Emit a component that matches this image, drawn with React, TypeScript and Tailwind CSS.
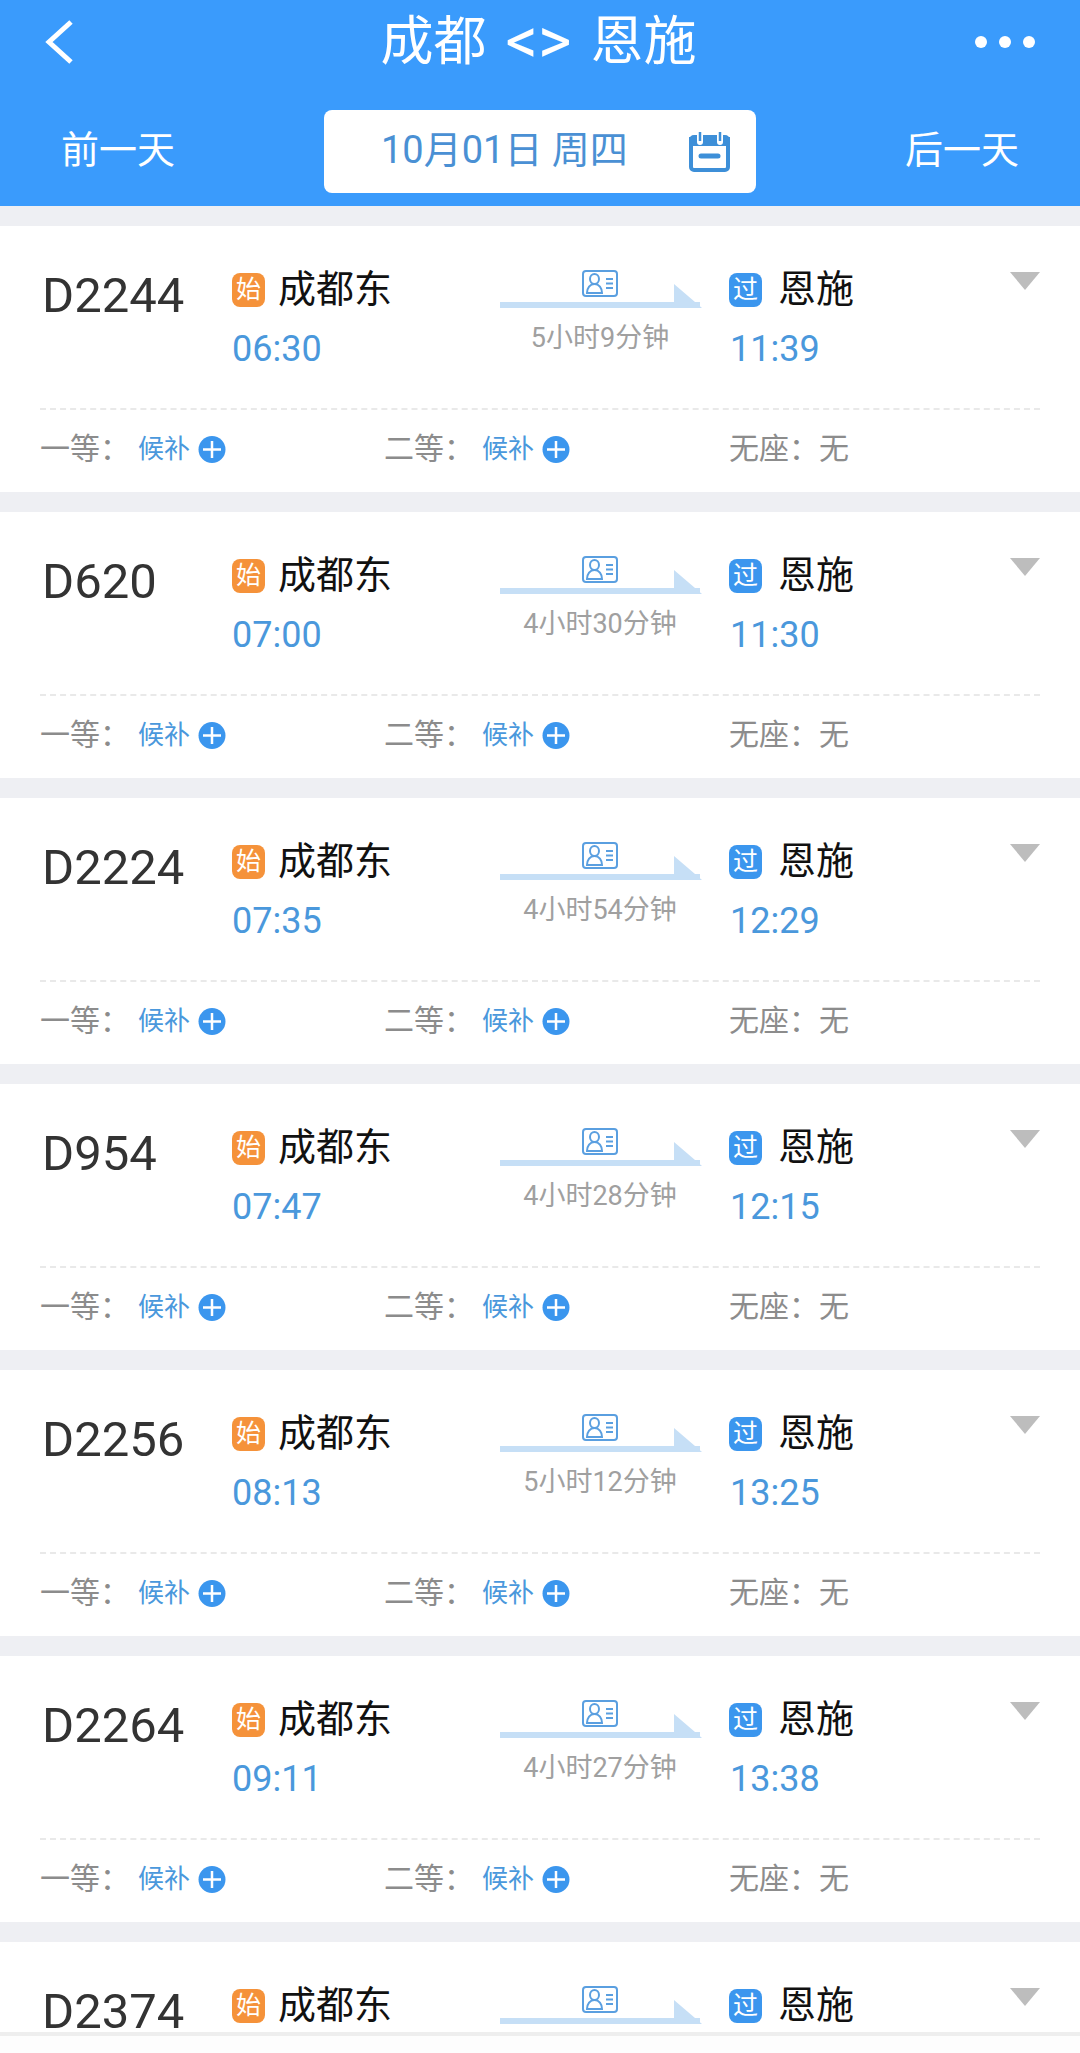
const trains = [
  { no: 'D2244', dep: '06:30', dur: '5小时9分钟', arr: '11:39' },
  { no: 'D620', dep: '07:00', dur: '4小时30分钟', arr: '11:30' },
  { no: 'D2224', dep: '07:35', dur: '4小时54分钟', arr: '12:29' },
  { no: 'D954', dep: '07:47', dur: '4小时28分钟', arr: '12:15' },
  { no: 'D2256', dep: '08:13', dur: '5小时12分钟', arr: '13:25' },
  { no: 'D2264', dep: '09:11', dur: '4小时27分钟', arr: '13:38' },
  { no: 'D2374', dep: '', dur: '', arr: '' },
]

function IdIcon() {
  return (
    <svg width="36" height="27" viewBox="0 0 36 27" fill="none" stroke="#5a9fe0" strokeWidth="2">
      <rect x="1" y="1" width="34" height="25" rx="3" />
      <ellipse cx="12.500" cy="9" rx="4.500" ry="5" />
      <path d="M5 23c0-5 3-9 7.500-9s7.500 4 7.500 9z" />
      <path d="M24 9h7M24 13.500h7M24 18h7" />
    </svg>
  )
}

function PlusDot() {
  return (
    <svg width="28" height="27" viewBox="0 0 28 27">
      <circle cx="14" cy="13.500" r="13.500" fill="#3b96ee" />
      <path d="M14 5v17M5 13.500h18" stroke="#fff" strokeWidth="2.500" />
    </svg>
  )
}

function CalendarIcon() {
  return (
    <svg width="43" height="41" viewBox="0 0 43 41" fill="none">
      <rect x="3" y="6" width="37" height="33" rx="3" stroke="#3d8fd8" strokeWidth="4" />
      <path d="M1 6h41v9H1z" fill="#3d8fd8" />
      <path d="M12 1v10M32 1v10" stroke="#fff" strokeWidth="6" strokeLinecap="round" />
      <path d="M12 1v9M32 1v9" stroke="#3d8fd8" strokeWidth="2.500" />
      <path d="M13 25h17" stroke="#3d8fd8" strokeWidth="5" strokeLinecap="round" />
    </svg>
  )
}

function Badge({ text, color }: { text: string; color: string }) {
  return (
    <span
      className={`flex h-[34px] w-[33px] shrink-0 items-center justify-center rounded-[8px] text-[25px] leading-none text-white ${color}`}
    >
      {text}
    </span>
  )
}

function Seat({ label, width }: { label: string; width: string }) {
  return (
    <div className={`flex items-center ${width}`}>
      <span className="w-[98px] text-[30px] leading-none text-[#8c8c8c]">{label}：</span>
      <span className="text-[26px] leading-none text-[#4a98dc]">候补</span>
      <span className="ml-[8px] flex">
        <PlusDot />
      </span>
    </div>
  )
}

function TrainCard({ no, dep, dur, arr }: (typeof trains)[number]) {
  return (
    <div className="h-[266px] shrink-0 bg-white">
      <div className="relative flex h-[182px] items-start pl-[42px]">
        <div className="mt-[43px] w-[190px] shrink-0 font-['Roboto'] text-[49px] leading-[54px] text-[#333]">{no}</div>
        <div className="w-[268px] shrink-0 pt-[45px]">
          <div className="flex h-[37px] items-center">
            <Badge text="始" color="bg-[#f5923a]" />
            <span className="ml-[13px] pb-[2px] text-[38px] leading-none text-[#111]">成都东</span>
          </div>
          <div className="mt-[21px] text-[36px] leading-[40px] text-[#4a98dc]">{dep}</div>
        </div>
        <div className="flex w-[200px] shrink-0 flex-col items-center pt-[44px]">
          <IdIcon />
          <div className="relative mt-[5px] h-[6px] w-full bg-[#c6dff6]">
            <span className="absolute right-[-2px] bottom-0 h-[24px] w-[28px] bg-[#c6dff6] [clip-path:polygon(0_0,100%_100%,0_100%)]" />
          </div>
          <div className="mt-[14px] text-[27px] leading-[32px] text-[#a0a0a0]">{dur}</div>
        </div>
        <div className="ml-[29px] pt-[45px]">
          <div className="flex h-[37px] items-center">
            <Badge text="过" color="bg-[#3b96ee]" />
            <span className="ml-[16px] pb-[2px] text-[38px] leading-none text-[#111]">恩施</span>
          </div>
          <div className="mt-[21px] ml-[1px] text-[36px] leading-[40px] text-[#4a98dc]">{arr}</div>
        </div>
        <span className="absolute top-[46px] right-[40px] h-[18px] w-[30px] bg-[#bdbdbd] [clip-path:polygon(0_0,100%_0,50%_100%)]" />
      </div>
      {dep && (
        <>
          <div className="mx-[40px] border-t-2 border-dashed border-[#e9e9e9]" />
          <div className="flex h-[62px] items-center pt-[16px] pl-[40px]">
            <Seat label="一等" width="w-[344px]" />
            <Seat label="二等" width="w-[345px]" />
            <span className="text-[30px] leading-none text-[#8c8c8c]">无座：无</span>
          </div>
        </>
      )}
    </div>
  )
}

export default function App() {
  return (
    <div className="flex h-[2053px] w-[1080px] flex-col overflow-hidden bg-[#eeeff3] font-['Roboto','Noto_Sans_CJK_SC',sans-serif]">
      <header className="h-[206px] shrink-0 bg-[#3a9bfc] text-white">
        <div className="flex h-[84px] items-center justify-between pr-[45px] pl-[42px]">
          <div className="w-[60px]">
            <svg width="34" height="46" viewBox="0 0 34 46" fill="none" stroke="#fff" strokeWidth="5">
              <path d="M29 3 7 23l22 20" />
            </svg>
          </div>
          <div className="flex items-center gap-[19px] text-[53px] leading-none">
            <span>成都</span>
            <span className="text-[64px]">&lt;&gt;</span>
            <span>恩施</span>
          </div>
          <div className="flex w-[60px] gap-[12px]">
            <span className="h-[12px] w-[12px] rounded-full bg-white" />
            <span className="h-[12px] w-[12px] rounded-full bg-white" />
            <span className="h-[12px] w-[12px] rounded-full bg-white" />
          </div>
        </div>
        <div className="mt-[26px] flex items-center justify-between pr-[61px] pl-[61px]">
          <span className="pb-[4px] text-[38px] leading-none">前一天</span>
          <div className="flex h-[83px] w-[432px] items-center rounded-[8px] bg-white pr-[25px] pl-[57px]">
            <span className="flex-1 pb-[4px] text-[38px] leading-none text-[#4a90d4]">10月01日 周四</span>
            <CalendarIcon />
          </div>
          <span className="pb-[4px] text-[38px] leading-none">后一天</span>
        </div>
      </header>
      <main className="flex h-[1826px] shrink-0 flex-col gap-[20px] overflow-hidden pt-[20px]">
        {trains.map((t) => (
          <TrainCard key={t.no} {...t} />
        ))}
      </main>
      <footer className="h-[21px] shrink-0 border-t-4 border-[#eeeeee] bg-[#fdfdfd]" />
    </div>
  )
}
